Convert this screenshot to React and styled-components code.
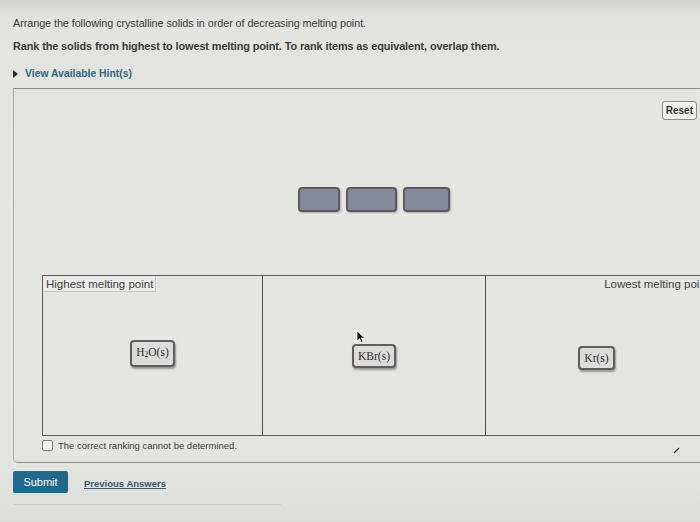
import React from "react";
import styled, { createGlobalStyle } from "styled-components";

const GlobalStyle = createGlobalStyle`
  html, body {
    margin: 0;
    padding: 0;
  }
  body {
    width: 700px;
    height: 522px;
    overflow: hidden;
    font-family: "Liberation Sans", Arial, sans-serif;
    background: linear-gradient(180deg, #d4d5d1 0px, #e2e3df 18px, #e6e7e3 200px, #e4e5e1 460px, #dcddd9 522px);
  }
`;

const Page = styled.div`
  position: relative;
  width: 700px;
  height: 522px;
  padding: 17px 0 0 13px;
  box-sizing: border-box;
`;

const Prompt = styled.p`
  margin: 0;
  font-size: 10.9px;
  line-height: 13px;
  color: #3a3a3a;
  font-weight: ${(p) => (p.$bold ? 700 : 400)};
  margin-top: ${(p) => p.$top || 0}px;
  letter-spacing: -0.1px;
`;

const HintToggle = styled.div`
  display: flex;
  align-items: center;
  gap: 7px;
  margin-top: 15px;
  font-size: 10.4px;
  font-weight: 700;
  color: #2f6682;
`;

const Caret = styled.span`
  width: 0;
  height: 0;
  border-top: 4px solid transparent;
  border-bottom: 4px solid transparent;
  border-left: 5px solid #2a2a2a;
`;

const Panel = styled.div`
  margin-top: 9px;
  width: 720px;
  height: 375px;
  box-sizing: border-box;
  border-top: 1px solid #8e8f8c;
  border-left: 1px solid #a5a6a2;
  border-bottom: 1px solid #8e8f8c;
  border-bottom-left-radius: 5px;
  padding-left: 28px;
  display: flex;
  flex-direction: column;
`;

const Workspace = styled.div`
  width: 664px;
  display: flex;
  flex-direction: column;
`;

const Toolbar = styled.div`
  display: flex;
  justify-content: flex-end;
  padding: 12px 9px 0 0;
  height: 19px;
`;

const ResetButton = styled.button`
  height: 19px;
  padding: 0 3px;
  font-family: "Liberation Sans", Arial, sans-serif;
  font-size: 10px;
  font-weight: 700;
  color: #333;
  background: #f1f1ef;
  border: 1px solid #8a8a88;
  border-radius: 3px;
`;

const SlotRow = styled.div`
  display: flex;
  justify-content: center;
  gap: 6px;
  margin-top: 67px;
`;

const Slot = styled.div`
  width: ${(p) => p.$w}px;
  height: 25px;
  box-sizing: border-box;
  background: #878a9b;
  border: 2px solid #5a5b60;
  border-radius: 4px;
  box-shadow: 1px 1px 2px rgba(0, 0, 0, 0.25);
`;

const Ranking = styled.div`
  margin-top: 63px;
  height: 161px;
  display: grid;
  grid-template-columns: 219px 223px 222px;
  border-top: 1.5px solid #5b5c5a;
  border-bottom: 1.5px solid #5b5c5a;
  border-left: 1.5px solid #5b5c5a;
  box-sizing: border-box;
`;

const Column = styled.div`
  position: relative;
  display: flex;
  align-items: center;
  justify-content: center;
  border-left: ${(p) => (p.$first ? "none" : "1.5px solid #4e4f4d")};
`;

const EndLabel = styled.span`
  position: absolute;
  top: 1px;
  ${(p) => (p.$right ? "right: -4px;" : "left: 1px;")}
  font-size: 11.5px;
  line-height: 14px;
  color: #3d3d3d;
  padding: 0 2px;
  white-space: nowrap;
  ${(p) =>
    p.$right
      ? ""
      : "background: #ececea; border-right: 1px solid #c8c8c5; border-bottom: 1px solid #c8c8c5;"}
`;

const Chip = styled.div`
  margin-top: ${(p) => p.$dy || 0}px;
  padding: 3px 4px;
  font-family: "Liberation Serif", "Times New Roman", serif;
  font-size: 11.5px;
  line-height: 14px;
  color: #2c2c2c;
  background: #dcdcda;
  border: 2px solid #5e5f5d;
  border-radius: 4px;
  box-shadow: 1px 2px 2px rgba(0, 0, 0, 0.35);
  sub {
    font-size: 7.5px;
    vertical-align: -1px;
  }
`;

const CheckRow = styled.label`
  display: flex;
  align-items: center;
  gap: 5px;
  margin-top: 4px;
  font-size: 9.5px;
  color: #3a3a3a;
`;

const Box = styled.span`
  width: 11px;
  height: 11px;
  box-sizing: border-box;
  border: 1px solid #7a7b79;
  border-radius: 2px;
  background: #f4f4f2;
`;

const Actions = styled.div`
  display: flex;
  align-items: center;
  gap: 16px;
  margin-top: 8px;
`;

const SubmitButton = styled.button`
  width: 55px;
  height: 22px;
  padding: 0;
  font-family: "Liberation Sans", Arial, sans-serif;
  font-size: 11px;
  color: #fff;
  background: #1f6a8c;
  border: none;
  border-radius: 2px;
`;

const PrevLink = styled.a`
  font-size: 9.5px;
  font-weight: 700;
  color: #35576a;
  text-decoration: underline;
  margin-top: 3px;
`;

const Rule = styled.div`
  margin-top: 11px;
  width: 268px;
  border-top: 1px solid #c9cac6;
`;

const Cursor = styled.svg`
  position: absolute;
  left: 356px;
  top: 330px;
`;

const Mark = styled.svg`
  position: absolute;
  left: 673px;
  top: 446px;
`;

export default function App() {
  return (
    <>
      <GlobalStyle />
      <Page>
        <Prompt>Arrange the following crystalline solids in order of decreasing melting point.</Prompt>
        <Prompt $bold $top={10}>
          Rank the solids from highest to lowest melting point. To rank items as equivalent, overlap them.
        </Prompt>
        <HintToggle>
          <Caret />
          View Available Hint(s)
        </HintToggle>
        <Panel>
          <Workspace>
            <Toolbar>
              <ResetButton>Reset</ResetButton>
            </Toolbar>
            <SlotRow>
              <Slot $w={42} />
              <Slot $w={51} />
              <Slot $w={47} />
            </SlotRow>
            <Ranking>
              <Column $first>
                <EndLabel>Highest melting point</EndLabel>
                <Chip $dy={-4}>
                  H<sub>2</sub>O(s)
                </Chip>
              </Column>
              <Column>
                <Chip>KBr(s)</Chip>
              </Column>
              <Column>
                <EndLabel $right>Lowest melting point</EndLabel>
                <Chip $dy={4}>Kr(s)</Chip>
              </Column>
            </Ranking>
            <CheckRow>
              <Box />
              The correct ranking cannot be determined.
            </CheckRow>
          </Workspace>
        </Panel>
        <Actions>
          <SubmitButton>Submit</SubmitButton>
          <PrevLink>Previous Answers</PrevLink>
        </Actions>
        <Rule />
        <Cursor width="10" height="14" viewBox="0 0 10 14">
          <path d="M1 1 L1 11 L3.6 8.6 L5.4 12.6 L7 11.9 L5.2 8 L8.6 8 Z" fill="#111" stroke="#eee" strokeWidth="0.8" />
        </Cursor>
        <Mark width="8" height="8" viewBox="0 0 8 8">
          <path d="M1 7 L6 2" stroke="#333" strokeWidth="1.2" />
        </Mark>
      </Page>
    </>
  );
}
